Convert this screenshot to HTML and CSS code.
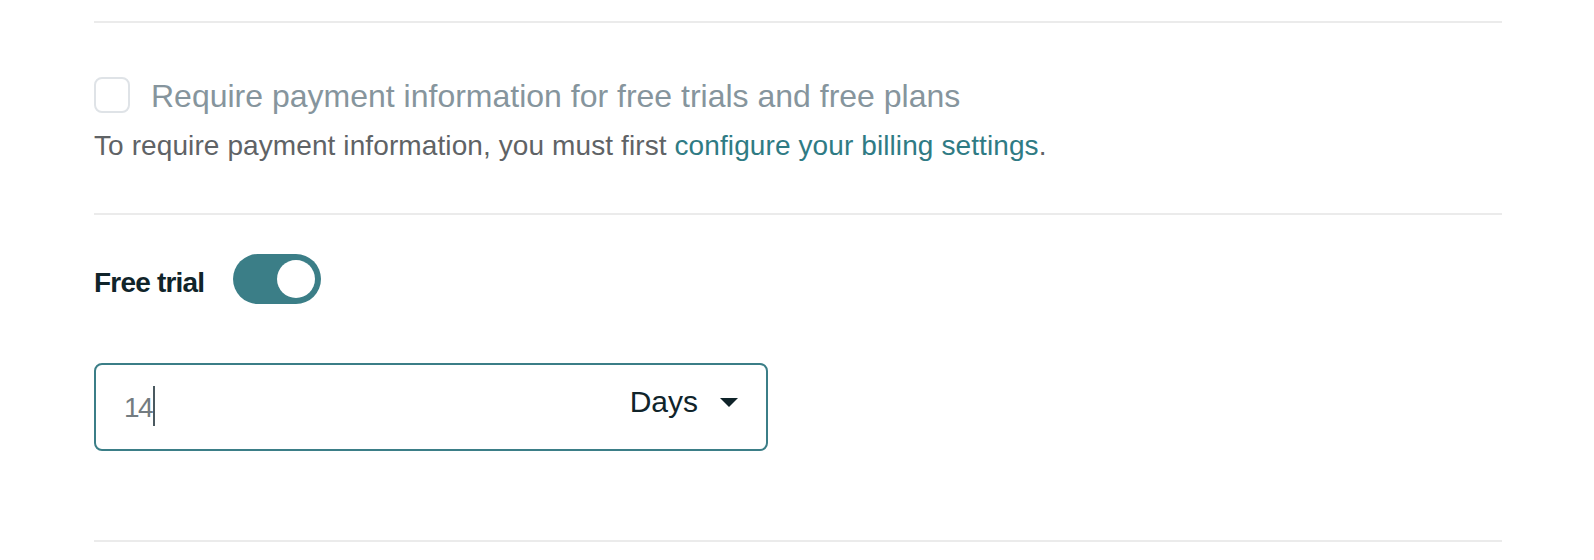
FILE: index.html
```html
<!DOCTYPE html>
<html lang="en">
<head>
<meta charset="utf-8">
<title>Free trial settings</title>
<link rel="stylesheet" href="styles.css">
</head>
<body>
<div class="panel">
  <div class="divider"></div>
  <section class="payment">
    <label class="check-row">
      <span class="checkbox"></span>
      <span class="check-label">Require payment information for free trials and free plans</span>
    </label>
    <p class="hint">To require payment information, you must first <a href="#" class="link">configure your billing settings</a>.</p>
  </section>
  <div class="divider"></div>
  <section class="trial">
    <div class="trial-row">
      <span class="trial-label">Free trial</span>
      <span class="toggle"><span class="knob"></span></span>
    </div>
    <div class="duration">
      <span class="value">14</span><span class="caret"></span>
      <span class="spacer"></span>
      <span class="unit">Days</span>
      <svg class="arrow" width="18" height="9" viewBox="0 0 18 9"><path d="M0 0 H18 L9 9 Z" fill="#0f2329"/></svg>
    </div>
  </section>
  <div class="divider"></div>
</div>
</body>
</html>
```
FILE: styles.css
```css
html, body {
  margin: 0;
  padding: 0;
  background: #ffffff;
}
body {
  font-family: "Liberation Sans", Arial, sans-serif;
}
.panel {
  width: 1408px;
  margin-left: 94px;
  padding-top: 21px;
}
.divider {
  height: 2px;
  background: #ebebeb;
}
.payment {
  padding-top: 52px;
  padding-bottom: 47px;
}
.check-row {
  display: flex;
  align-items: center;
  height: 40px;
}
.checkbox {
  box-sizing: border-box;
  width: 36px;
  height: 36px;
  border: 2px solid #dfe3e7;
  border-radius: 8px;
  margin-right: 21px;
  flex: none;
}
.check-label {
  font-size: 32px;
  line-height: 40px;
  color: #86959d;
  padding-top: 1px;
}
.hint {
  margin: 11px 0 0;
  font-size: 28px;
  line-height: 40px;
  letter-spacing: 0.1px;
  color: #5f6366;
}
.link {
  color: #2f7b84;
  text-decoration: none;
}
.trial {
  padding-top: 39px;
  padding-bottom: 89px;
}
.trial-row {
  display: flex;
  align-items: center;
  height: 50px;
}
.trial-label {
  font-size: 28px;
  font-weight: 700;
  color: #10242a;
  letter-spacing: -0.8px;
  padding-top: 8px;
  margin-right: 29px;
}
.toggle {
  box-sizing: border-box;
  display: flex;
  align-items: center;
  justify-content: flex-end;
  width: 88px;
  height: 50px;
  padding: 0 6px;
  border-radius: 25px;
  background: #3b7e87;
}
.knob {
  width: 38px;
  height: 38px;
  border-radius: 50%;
  background: #ffffff;
}
.duration {
  box-sizing: border-box;
  display: flex;
  align-items: flex-start;
  width: 674px;
  height: 88px;
  margin-top: 59px;
  padding: 0 28px;
  border: 2px solid #3b7e87;
  border-radius: 8px;
}
.value {
  font-size: 28px;
  line-height: 30px;
  letter-spacing: -1.5px;
  margin-top: 28px;
  color: #737c81;
}
.caret {
  width: 2px;
  height: 40px;
  margin-top: 21px;
  margin-left: 1px;
  background: #4a5960;
}
.spacer {
  flex: 1;
}
.unit {
  font-size: 30px;
  line-height: 34px;
  margin-top: 20px;
  color: #10242a;
}
.arrow {
  margin-top: 33px;
  margin-left: 22px;
  flex: none;
}
```
